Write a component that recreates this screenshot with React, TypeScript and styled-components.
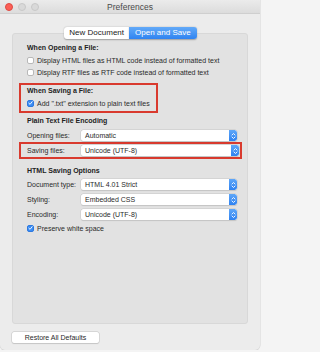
import React from 'react';
import styled, { createGlobalStyle } from 'styled-components';

const GlobalStyle = createGlobalStyle`
  html, body {
    margin: 0;
    padding: 0;
    background: #f4f4f4;
  }
  body {
    font-family: "Liberation Sans", Arial, sans-serif;
    color: #262626;
  }
`;

const CheckMark = () => (
  <svg width="6" height="6" viewBox="0 0 6 6">
    <path d="M1 3.2 L2.5 4.6 L5 1.4" fill="none" stroke="#fff" strokeWidth="1.1" strokeLinecap="round" strokeLinejoin="round" />
  </svg>
);

const Arrows = () => (
  <svg width="5" height="8" viewBox="0 0 5 8">
    <path d="M1 3 L2.5 1.5 L4 3 M1 5 L2.5 6.5 L4 5" fill="none" stroke="#fff" strokeWidth="0.9" strokeLinecap="round" strokeLinejoin="round" />
  </svg>
);

type CheckProps = { checked?: boolean; label: string };

const Check: React.FC<CheckProps> = ({ checked, label }) => (
  <CheckRow>
    <Box $checked={checked}>{checked && <CheckMark />}</Box>
    <span>{label}</span>
  </CheckRow>
);

type SelectProps = { label: string; value: string };

const Select: React.FC<SelectProps> = ({ label, value }) => (
  <SelectRow>
    <FieldLabel>{label}</FieldLabel>
    <Popup>
      <PopupValue>{value}</PopupValue>
      <PopupArrow><Arrows /></PopupArrow>
    </Popup>
  </SelectRow>
);

const App: React.FC = () => {
  return (
    <>
      <GlobalStyle />
      <Window>
        <TitleBar>
          <Lights>
            <Light $color="#fc5f57" $border="#de4a42" />
            <Light $color="#d9d9d9" $border="#c8c8c8" />
            <Light $color="#d9d9d9" $border="#c8c8c8" />
          </Lights>
          <Title>Preferences</Title>
        </TitleBar>
        <Body>
          <Tabs>
            <Tab>New Document</Tab>
            <Tab $active>Open and Save</Tab>
          </Tabs>
          <Panel>
            <Heading>When Opening a File:</Heading>
            <Check label="Display HTML files as HTML code instead of formatted text" />
            <Check label="Display RTF files as RTF code instead of formatted text" />

            <Highlight $width={139} $top={5}>
              <Heading>When Saving a File:</Heading>
              <Check checked label={'Add ".txt" extension to plain text files'} />
            </Highlight>

            <Heading $top={3}>Plain Text File Encoding</Heading>
            <PlainSelects>
              <Select label="Opening files:" value="Automatic" />
              <Highlight $width={223} $top={0} $dense>
                <Select label="Saving files:" value="Unicode (UTF-8)" />
              </Highlight>
            </PlainSelects>

            <Heading $top={7}>HTML Saving Options</Heading>
            <HtmlSelects>
              <Select label="Document type:" value="HTML 4.01 Strict" />
              <Select label="Styling:" value="Embedded CSS" />
              <Select label="Encoding:" value="Unicode (UTF-8)" />
            </HtmlSelects>
            <Check checked label="Preserve white space" />
          </Panel>
          <Footer>
            <Button>Restore All Defaults</Button>
          </Footer>
        </Body>
      </Window>
    </>
  );
};

const Window = styled.div`
  width: 260px;
  height: 350px;
  background: #ececec;
  border-radius: 0 0 5px 5px;
  box-shadow: 0 0 0 0.5px #d4d4d4;
  overflow: hidden;
`;

const TitleBar = styled.div`
  height: 13px;
  position: relative;
  display: flex;
  align-items: center;
  justify-content: center;
  background: linear-gradient(#ebebeb, #dcdcdc);
  border-bottom: 1px solid #cfcfcf;
`;

const Lights = styled.div`
  position: absolute;
  left: 5px;
  top: 3px;
  display: flex;
  gap: 5px;
`;

const Light = styled.div<{ $color: string; $border: string }>`
  width: 6px;
  height: 6px;
  border-radius: 50%;
  background: ${(p) => p.$color};
  border: 0.5px solid ${(p) => p.$border};
`;

const Title = styled.div`
  font-size: 8.5px;
  color: #4a4a4a;
`;

const Body = styled.div`
  padding: 13px 12px 0;
`;

const Tabs = styled.div`
  position: relative;
  z-index: 1;
  display: flex;
  justify-content: center;
  margin-bottom: -6px;
  margin-left: 1px;
`;

const Tab = styled.div<{ $active?: boolean }>`
  height: 12px;
  line-height: 12px;
  font-size: 8px;
  padding: 0 ${(p) => (p.$active ? '6px' : '5px')};
  background: ${(p) => (p.$active ? 'linear-gradient(#63aaf8, #2f83f1)' : '#fff')};
  color: ${(p) => (p.$active ? '#fff' : '#222')};
  box-shadow: 0 0.5px 1.5px rgba(0, 0, 0, 0.3);
  border-radius: ${(p) => (p.$active ? '0 3px 3px 0' : '3px 0 0 3px')};
`;

const Panel = styled.div`
  height: 291px;
  box-sizing: border-box;
  background: #e2e2e2;
  border: 0.5px solid #d8d8d8;
  border-radius: 3px;
  padding: 9px 10px 0 14px;
`;

const Heading = styled.div<{ $top?: number }>`
  font-size: 7px;
  font-weight: bold;
  line-height: 10px;
  color: #222;
  margin-top: ${(p) => p.$top ?? 0}px;
  margin-bottom: 1px;
`;

const CheckRow = styled.div`
  height: 12px;
  display: flex;
  align-items: center;
  gap: 3px;
  font-size: 7px;
  color: #2a2a2a;
`;

const Box = styled.div<{ $checked?: boolean }>`
  width: 7px;
  height: 7px;
  box-sizing: border-box;
  border-radius: 2px;
  display: flex;
  align-items: center;
  justify-content: center;
  background: ${(p) => (p.$checked ? '#3a8cf4' : '#fff')};
  border: 0.5px solid ${(p) => (p.$checked ? '#2f79de' : '#b8b8b8')};
`;

const Highlight = styled.div<{ $width: number; $top: number; $dense?: boolean }>`
  width: ${(p) => p.$width}px;
  box-sizing: border-box;
  margin-left: -8px;
  margin-top: ${(p) => p.$top}px;
  border: 2px solid #d93a2e;
  padding: ${(p) => (p.$dense ? '0 1px 0 6px' : '1px 0 2px 6px')};
`;

const PlainSelects = styled.div`
  margin-top: 3px;
`;

const HtmlSelects = styled.div`
  display: flex;
  flex-direction: column;
`;

const SelectRow = styled.div`
  height: 13px;
  display: flex;
  align-items: center;
  ${HtmlSelects} & {
    height: 15px;
  }
`;

const FieldLabel = styled.div`
  width: 54px;
  font-size: 7px;
  color: #2a2a2a;
`;

const Popup = styled.div`
  flex: 1;
  height: 11px;
  display: flex;
  align-items: center;
  background: #fff;
  border-radius: 2.5px;
  box-shadow: 0 0 0 0.5px #c9c9c9, 0 0.5px 1px rgba(0, 0, 0, 0.15);
  overflow: hidden;
`;

const PopupValue = styled.div`
  flex: 1;
  font-size: 7px;
  color: #2a2a2a;
  padding-left: 4px;
`;

const PopupArrow = styled.div`
  width: 8px;
  height: 11px;
  display: flex;
  align-items: center;
  justify-content: center;
  background: linear-gradient(#5fa7f8, #2f82f1);
  border-radius: 0 2.5px 2.5px 0;
`;

const Footer = styled.div`
  padding-top: 8px;
`;

const Button = styled.div`
  width: 87px;
  height: 11px;
  box-sizing: border-box;
  display: flex;
  align-items: center;
  justify-content: center;
  background: #fff;
  border-radius: 2px;
  box-shadow: 0 0 0 0.5px #c4c4c4, 0 0.5px 1px rgba(0, 0, 0, 0.15);
  font-size: 7px;
  color: #2a2a2a;
`;

export default App;
